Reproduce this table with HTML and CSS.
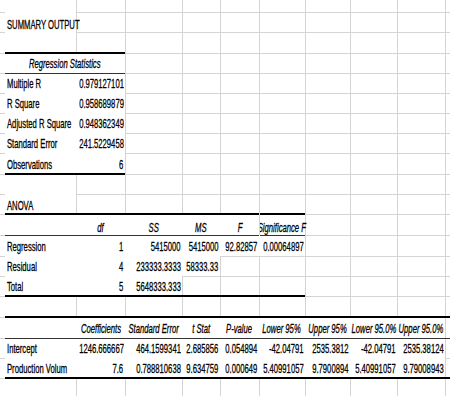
FILE: index.html
```html
<!DOCTYPE html>
<html lang="en">
<head>
<meta charset="utf-8">
<title>Summary Output</title>
<link rel="stylesheet" href="styles.css">
</head>
<body>
<div class="sheet">
  <div class="cola"></div>
  <div class="c l title"><span>SUMMARY OUTPUT</span></div>

  <div class="tbl reg">
    <div class="c h t hb span2"><span>Regression Statistics</span></div>
    <div class="c l"><span>Multiple R</span></div><div class="c r"><span>0.979127101</span></div>
    <div class="c l"><span>R Square</span></div><div class="c r"><span>0.958689879</span></div>
    <div class="c l"><span>Adjusted R Square</span></div><div class="c r"><span>0.948362349</span></div>
    <div class="c l"><span>Standard Error</span></div><div class="c r"><span>241.5229458</span></div>
    <div class="c l b"><span>Observations</span></div><div class="c r b"><span>6</span></div>
  </div>

  <div class="c l anova-title"><span>ANOVA</span></div>

  <div class="tbl anova">
    <div class="c e t hb"></div>
    <div class="c h t hb"><span>df</span></div>
    <div class="c h t hb"><span>SS</span></div>
    <div class="c h t hb"><span>MS</span></div>
    <div class="c h t hb"><span>F</span></div>
    <div class="c h t hb sig"><span>Significance F</span></div>

    <div class="c l"><span>Regression</span></div>
    <div class="c r"><span>1</span></div>
    <div class="c r"><span>5415000</span></div>
    <div class="c r"><span>5415000</span></div>
    <div class="c r"><span>92.82857</span></div>
    <div class="c r"><span>0.00064897</span></div>

    <div class="c l"><span>Residual</span></div>
    <div class="c r"><span>4</span></div>
    <div class="c r"><span>233333.3333</span></div>
    <div class="c r"><span>58333.33</span></div>
    <div class="c e"></div>
    <div class="c e"></div>

    <div class="c l b"><span>Total</span></div>
    <div class="c r b"><span>5</span></div>
    <div class="c r b"><span>5648333.333</span></div>
    <div class="c e b"></div>
    <div class="c e b"></div>
    <div class="c e b"></div>
  </div>

  <div class="tbl coef">
    <div class="c e t hb"></div>
    <div class="c h t hb"><span>Coefficients</span></div>
    <div class="c h t hb"><span>Standard Error</span></div>
    <div class="c h t hb"><span>t Stat</span></div>
    <div class="c h t hb"><span>P-value</span></div>
    <div class="c h t hb"><span>Lower 95%</span></div>
    <div class="c h t hb"><span>Upper 95%</span></div>
    <div class="c h t hb"><span>Lower 95.0%</span></div>
    <div class="c h t hb"><span>Upper 95.0%</span></div>
    <div class="c e t hb"></div>

    <div class="c l"><span>Intercept</span></div>
    <div class="c r"><span>1246.666667</span></div>
    <div class="c r"><span>464.1599341</span></div>
    <div class="c r"><span>2.685856</span></div>
    <div class="c r"><span>0.054894</span></div>
    <div class="c r"><span>-42.04791</span></div>
    <div class="c r"><span>2535.3812</span></div>
    <div class="c r"><span>-42.04791</span></div>
    <div class="c r"><span>2535.38124</span></div>
    <div class="c e"></div>

    <div class="c l b"><span>Production Volum</span></div>
    <div class="c r b"><span>7.6</span></div>
    <div class="c r b"><span>0.788810638</span></div>
    <div class="c r b"><span>9.634759</span></div>
    <div class="c r b"><span>0.000649</span></div>
    <div class="c r b"><span>5.40991057</span></div>
    <div class="c r b"><span>9.7900894</span></div>
    <div class="c r b"><span>5.40991057</span></div>
    <div class="c r b"><span>9.79008943</span></div>
    <div class="c e b"></div>
  </div>
</div>
</body>
</html>
```

FILE: styles.css
```css
* { box-sizing: border-box; margin: 0; padding: 0; }
html, body { background: #fff; }
body {
  width: 450px;
  height: 396px;
  overflow: hidden;
  font: 13px/13px "Liberation Sans", Arial, sans-serif;
  color: #000;
}

.sheet {
  display: grid;
  width: 450px;
  height: 396px;
  grid-template-columns: 5px 71px 49px 57px 38px 39px 46px 45px 47px 48px 5px;
  grid-template-rows: 12px 20px 21px 20px 20px 20px 20px 20px 21px 20px 20px 21px 21px 20px 20px 21px 21px 20px 20px 18px;
  background-color: #fff;
  background-image:
    linear-gradient(#d4d4d4, #d4d4d4), linear-gradient(#d4d4d4, #d4d4d4), linear-gradient(#d4d4d4, #d4d4d4),
    linear-gradient(#d4d4d4, #d4d4d4), linear-gradient(#d4d4d4, #d4d4d4), linear-gradient(#d4d4d4, #d4d4d4),
    linear-gradient(#d4d4d4, #d4d4d4), linear-gradient(#d4d4d4, #d4d4d4), linear-gradient(#d4d4d4, #d4d4d4),
    linear-gradient(#d4d4d4, #d4d4d4), linear-gradient(#d4d4d4, #d4d4d4), linear-gradient(#d4d4d4, #d4d4d4),
    linear-gradient(#d4d4d4, #d4d4d4), linear-gradient(#d4d4d4, #d4d4d4), linear-gradient(#d4d4d4, #d4d4d4),
    linear-gradient(#d4d4d4, #d4d4d4), linear-gradient(#d4d4d4, #d4d4d4), linear-gradient(#d4d4d4, #d4d4d4),
    linear-gradient(#d4d4d4, #d4d4d4), linear-gradient(#d4d4d4, #d4d4d4), linear-gradient(#d4d4d4, #d4d4d4),
    linear-gradient(#d4d4d4, #d4d4d4), linear-gradient(#d4d4d4, #d4d4d4), linear-gradient(#d4d4d4, #d4d4d4),
    linear-gradient(#d4d4d4, #d4d4d4), linear-gradient(#d4d4d4, #d4d4d4), linear-gradient(#d4d4d4, #d4d4d4),
    linear-gradient(#d4d4d4, #d4d4d4);
  background-repeat: no-repeat;
  background-size:
    1px 100%, 1px 100%, 1px 100%, 1px 100%, 1px 100%, 1px 100%, 1px 100%, 1px 100%, 1px 100%,
    100% 1px, 100% 1px, 100% 1px, 100% 1px, 100% 1px, 100% 1px, 100% 1px, 100% 1px, 100% 1px, 100% 1px,
    100% 1px, 100% 1px, 100% 1px, 100% 1px, 100% 1px, 100% 1px, 100% 1px, 100% 1px, 100% 1px;
  background-position:
    76px 0, 125px 0, 182px 0, 220px 0, 259px 0, 305px 0, 350px 0, 397px 0, 445px 0,
    0 12px, 0 32px, 0 53px, 0 73px, 0 93px, 0 113px, 0 133px, 0 153px, 0 174px, 0 194px,
    0 214px, 0 235px, 0 256px, 0 276px, 0 296px, 0 317px, 0 338px, 0 358px, 0 378px;
}

/* column A carries a white fill, hiding its gridlines */
.cola { grid-column: 2; grid-row: 1 / -1; background: #fff; }

.tbl { display: grid; }
.reg {
  grid-column: 2 / 4;
  grid-row: 4 / 10;
  grid-template-columns: 71px 49px;
  grid-template-rows: 20px 20px 20px 20px 20px 21px;
}
.anova {
  grid-column: 2 / 8;
  grid-row: 12 / 16;
  grid-template-columns: 71px 49px 57px 38px 39px 46px;
  grid-template-rows: 21px 21px 20px 20px;
}
.coef {
  grid-column: 2 / 12;
  grid-row: 17 / 20;
  grid-template-columns: 71px 49px 57px 38px 39px 46px 45px 47px 48px 5px;
  grid-template-rows: 21px 20px 20px;
}
.span2 { grid-column: span 2; }

/* cells */
.c {
  display: flex;
  align-items: flex-end;
  overflow: hidden;
  white-space: nowrap;
  background: #fff;
  padding-bottom: 3.5px;
}
.c span {
  display: inline-block;
  transform: scaleX(0.59);
  -webkit-text-stroke: 0.3px #000;
}
.l { justify-content: flex-start; padding-left: 2px; }
.l span { transform-origin: 0 100%; }
.r { justify-content: flex-end; padding-right: 1.5px; }
.r span { transform-origin: 100% 100%; }
.h { justify-content: center; font-style: italic; }
.h span { transform-origin: 50% 100%; }
.e { background: transparent; }

.t { margin-top: -1px; border-top: 2px solid #000; z-index: 1; }
.hb { margin-bottom: -1px; border-bottom: 1px solid #333; z-index: 1; }
.b { margin-bottom: -1px; border-bottom: 2px solid #000; padding-bottom: 2.5px; z-index: 1; }

.reg .hb { padding-bottom: 3.5px; }
.anova .hb { padding-bottom: 1px; }
.coef .hb { padding-bottom: 3px; }

.c.sig { overflow: visible; clip-path: inset(-4px -60px -4px 1px); }

.c.title {
  grid-column: 2;
  grid-row: 2;
  background: transparent;
  overflow: visible;
  padding-bottom: 1.5px;
  z-index: 1;
}
.c.anova-title {
  grid-column: 2;
  grid-row: 11;
  background: transparent;
  overflow: visible;
  padding-bottom: 2px;
}
```
